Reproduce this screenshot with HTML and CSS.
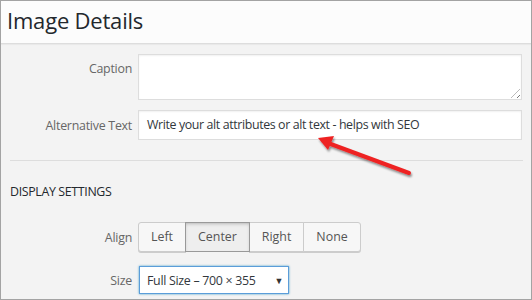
FILE: index.html
```html
<!DOCTYPE html>
<html>
<head>
<meta charset="utf-8">
<link rel="stylesheet" href="styles.css">
</head>
<body>
<div class="dialog">
  <div class="header"><h1 class="title">Image Details</h1></div>
  <div class="content">
    <div class="row row-caption">
      <label class="label">Caption</label>
      <div class="textarea"><span class="grip"></span></div>
    </div>
    <div class="row row-alt">
      <label class="label">Alternative Text</label>
      <div class="input">Write your alt attributes or alt text - helps with SEO</div>
    </div>
    <div class="sep"></div>
    <h2 class="section">DISPLAY SETTINGS</h2>
    <div class="row row-align">
      <label class="label">Align</label>
      <div class="btngroup">
        <span class="btn">Left</span><span class="btn active">Center</span><span class="btn">Right</span><span class="btn">None</span>
      </div>
    </div>
    <div class="row row-size">
      <label class="label">Size</label>
      <div class="select"><span>Full Size – 700 × 355</span><span class="caret">▼</span></div>
    </div>
  </div>
  <svg class="arrow" width="532" height="300" viewBox="0 0 532 300">
    <defs>
      <filter id="sh" x="-20%" y="-20%" width="140%" height="140%">
        <feGaussianBlur in="SourceAlpha" stdDeviation="1.2"/>
        <feOffset dx="1" dy="1.5" result="b"/>
        <feComponentTransfer><feFuncA type="linear" slope="0.45"/></feComponentTransfer>
        <feMerge><feMergeNode/><feMergeNode in="SourceGraphic"/></feMerge>
      </filter>
    </defs>
    <g filter="url(#sh)">
      <line x1="409" y1="173" x2="328" y2="143" stroke="#ee2424" stroke-width="4" stroke-linecap="round"/>
      <polygon points="318,138 334,136 328,150" fill="#ee2424"/>
    </g>
  </svg>
</div>
</body>
</html>
```
FILE: styles.css
```css
html, body { margin: 0; padding: 0; }
body { font-family: "Open Sans", "Noto Sans", sans-serif; }
.dialog {
  position: relative;
  width: 532px; height: 300px;
  box-sizing: border-box;
  border: 1px solid #a3a3a3;
  background: #f3f3f3;
  overflow: hidden;
}
.header {
  height: 42px;
  background: #fcfcfc;
  border-bottom: 1px solid #dddddd;
  box-shadow: 0 1px 1px rgba(0,0,0,0.04);
}
.title {
  margin: 0;
  padding-left: 6px;
  font-weight: 400;
  font-size: 22px;
  line-height: 38px;
  color: #23282d;
  letter-spacing: -0.2px;
}
.content { padding: 10px 8px 0 9px; }
.row { display: flex; align-items: center; }
.label {
  width: 122px;
  text-align: right;
  padding-right: 6px;
  font-size: 12.4px;
  letter-spacing: -0.25px;
  color: #666;
}
.row-caption { align-items: flex-start; }
.row-caption .label { padding-top: 6px; }
.textarea {
  position: relative;
  width: 382px; height: 44px;
  background: #fff;
  border: 1px solid #dddddd;
  box-shadow: inset 0 1px 2px rgba(0,0,0,0.06);
}
.grip {
  position: absolute; right: 1px; bottom: 1px;
  width: 9px; height: 9px;
  background: repeating-linear-gradient(135deg, transparent 0 2px, #777 2px 3px, transparent 3px 4px);
  clip-path: polygon(100% 0, 100% 100%, 0 100%);
}
.row-alt { margin-top: 10px; }
.input {
  width: 374px; height: 28px;
  padding-left: 8px;
  background: #fff;
  border: 1px solid #dddddd;
  box-shadow: inset 0 1px 2px rgba(0,0,0,0.06);
  font-size: 12.4px;
  letter-spacing: -0.38px;
  line-height: 28px;
  color: #32373c;
}
.sep {
  margin-top: 20px;
  height: 1px;
  width: 513px;
  background: #dddddd;
}
.section {
  margin: 23px 0 0 0;
  font-size: 12.4px;
  letter-spacing: -0.35px;
  font-weight: 400;
  color: #23282d;
  line-height: 16px;
}
.row-align { margin-top: 22px; }
.btngroup { display: flex; }
.btn {
  height: 28px;
  line-height: 28px;
  padding: 0 12px;
  font-size: 12.4px;
  color: #555;
  background: #f7f7f7;
  border: 1px solid #cccccc;
  box-shadow: 0 1px 0 #cccccc;
  margin-left: -1px;
}
.btn:first-child { margin-left: 0; border-radius: 3px 0 0 3px; }
.btn:last-child { border-radius: 0 3px 3px 0; }
.btn.active {
  background: #eeeeee;
  border-color: #999999;
  box-shadow: inset 0 2px 5px -3px rgba(0,0,0,0.5);
  position: relative;
  z-index: 1;
}
.row-size { margin-top: 14px; }
.row-size .label { padding-right: 7px; }
.select {
  width: 136px; height: 26px;
  display: flex; align-items: center; justify-content: space-between;
  padding: 0 5px 0 7px;
  background: #fff;
  border: 1px solid #5b9dd9;
  box-shadow: 0 0 2px rgba(30,140,190,0.8);
  font-size: 12.4px;
  letter-spacing: -0.3px;
  color: #32373c;
}
.caret { font-size: 9px; color: #333; }
.arrow { position: absolute; left: -1px; top: -1px; pointer-events: none; }
```
